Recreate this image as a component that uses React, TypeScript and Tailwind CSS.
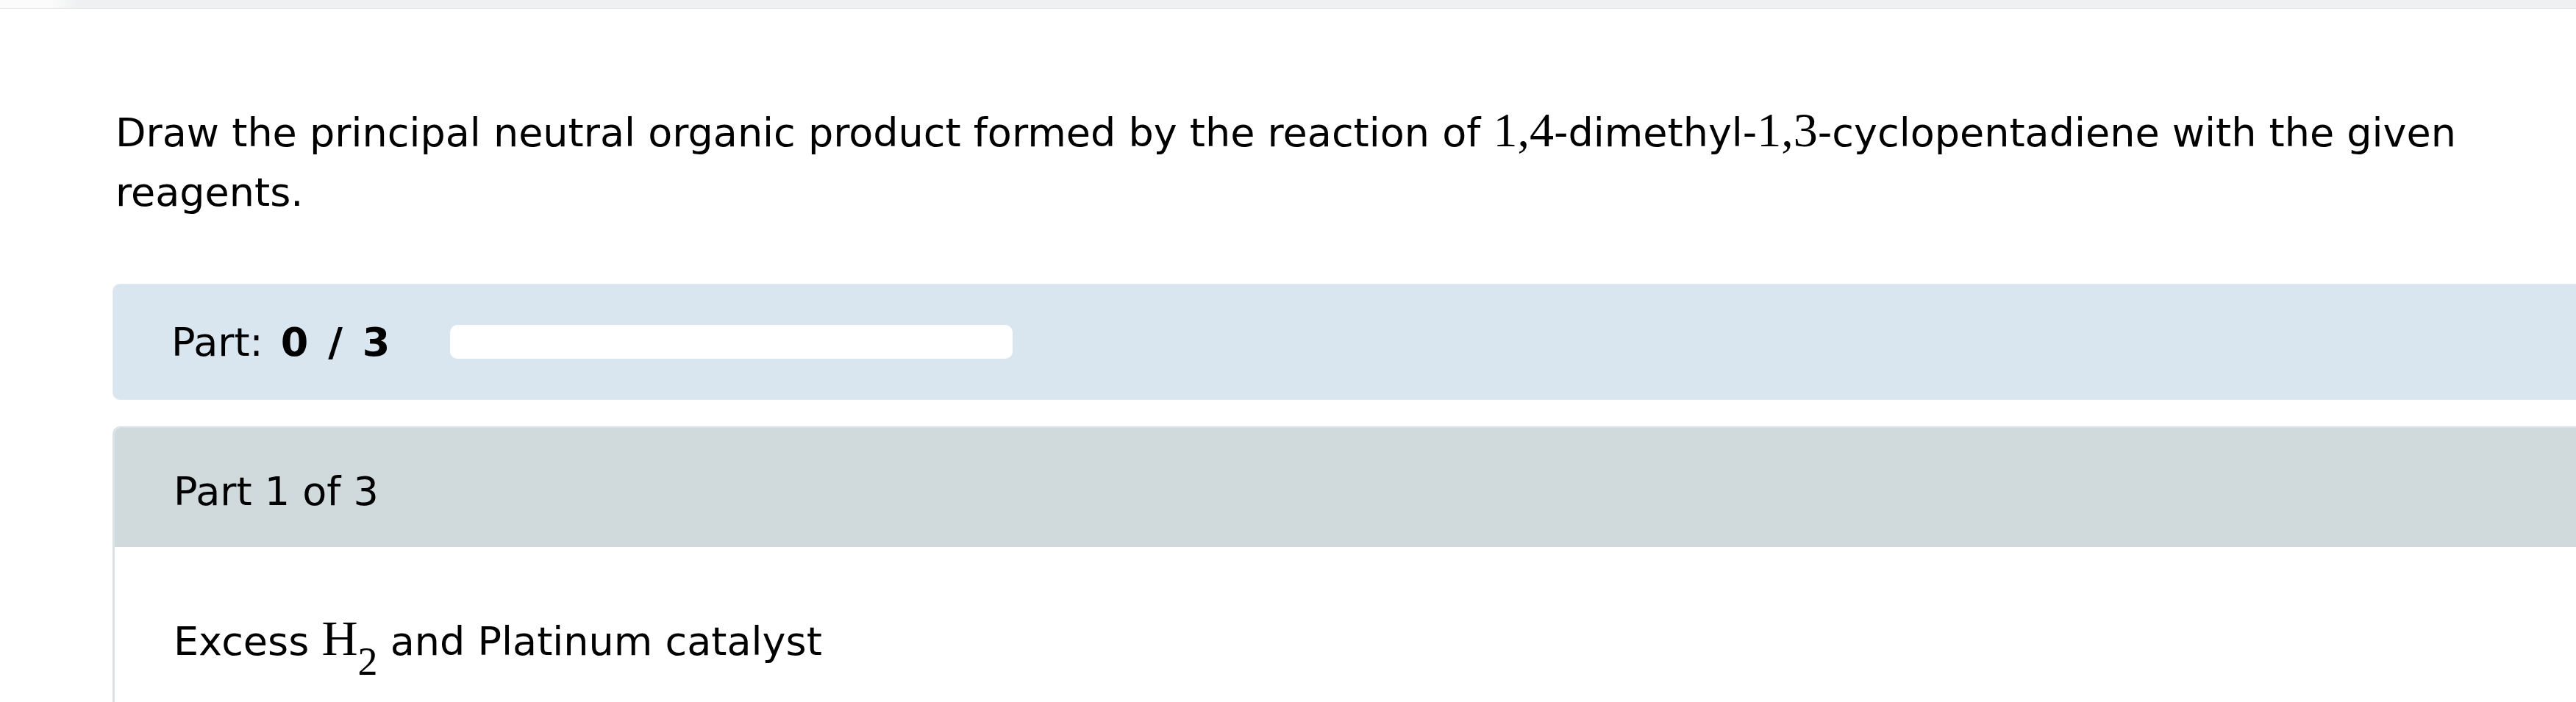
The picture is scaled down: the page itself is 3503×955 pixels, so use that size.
import React from 'react';

const serif = "font-['Liberation_Serif','Times_New_Roman',serif]";

const App: React.FC = () => {
  return (
    <div className="min-h-screen bg-white text-black font-['DejaVu_Sans','Verdana',sans-serif] text-[54px] leading-[81px] overflow-hidden">
      {/* top strip */}
      <div className="h-[12px] border-b border-[#e6e8ea] bg-gradient-to-r from-[#fbfbfb] from-[2%] to-[#eff0f1] to-[3%]" />

      <div className="pl-[153px]">
        <p className="mt-[124px] pl-[4px] pr-[40px]">
          Draw the principal neutral organic product formed by the reaction of{' '}
          <span className={`${serif} text-[66px]`}>1,4</span>-dimethyl-
          <span className={`${serif} text-[66px]`}>1,3</span>-cyclopentadiene with the given reagents.
        </p>

        {/* progress */}
        <div className="mt-[84px] h-[158px] flex items-center pl-[79px] bg-[#dae6ef] border border-[#e2eaf1] border-r-0 rounded-l-[10px]">
          <span className="whitespace-nowrap">
            Part:<span className="ml-[24px] font-bold tracking-[4px]">0 / 3</span>
          </span>
          <div className="ml-[78px] w-[765px] h-[46px] rounded-[10px] bg-white" />
        </div>

        {/* part card */}
        <div className="mt-[36px] rounded-tl-[10px] border-l-[3px] border-t-[2px] border-[#dbe2e6]">
          <div className="h-[162px] pt-[46px] pl-[80px] bg-[#d0d9dc] rounded-tl-[8px]">Part 1 of 3</div>
          <div className="pt-[84px] pl-[80px] pb-[60px] bg-white">
            Excess <span className={`${serif} text-[68px]`}>H</span>
            <sub className={`${serif} text-[54px] relative top-[27px]`}>2</sub> and Platinum catalyst
          </div>
        </div>
      </div>
    </div>
  );
};

export default App;
